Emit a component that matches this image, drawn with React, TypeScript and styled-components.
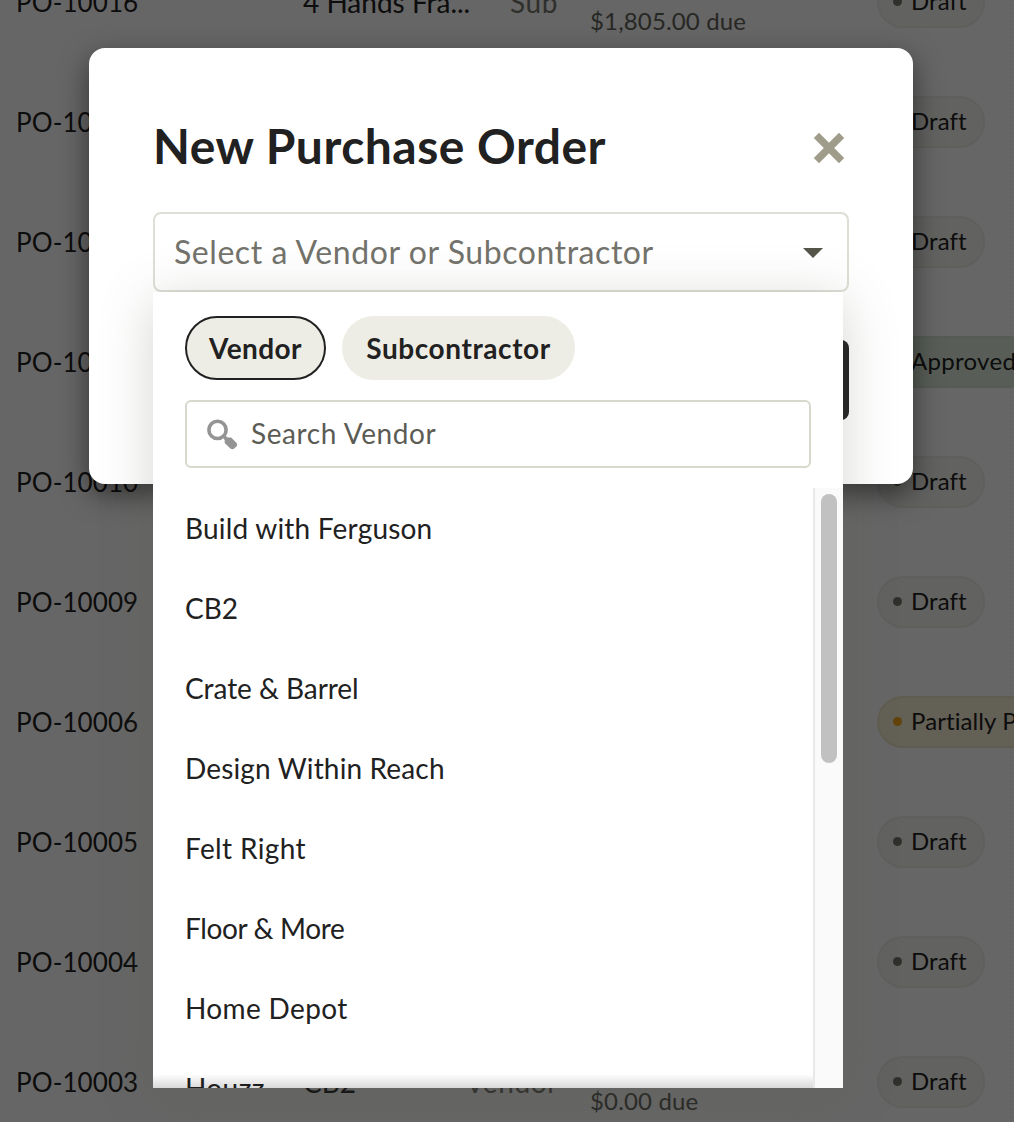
import React from "react";
import styled, { createGlobalStyle } from "styled-components";

const GlobalStyle = createGlobalStyle`
  * { box-sizing: border-box; }
  body {
    margin: 0;
    background: #fff;
    color: #212121;
    font-family: Lato, "Open Sans", sans-serif;
    overflow: hidden;
  }
  button, input { font-family: inherit; }
`;

const Screen = styled.main`
  position: relative;
  height: 1122px;
  overflow: hidden;
`;

const OrderTable = styled.div`
  position: relative;
  display: flex;
  flex-direction: column;
  margin-top: -58px;
`;

const OrderRow = styled.div`
  display: grid;
  grid-template-columns: 287px 176px 77px 34px 286px 1fr;
  align-items: center;
  height: 120px;
  padding-left: 17px;
  white-space: nowrap;
`;

const OrderNumber = styled.span`
  margin: 0 0 1px -1px;
  font-size: 26px;
  letter-spacing: 0.1px;
`;

const VendorName = styled.span`
  margin: 0 0 1px -1px;
  font-size: 28px;
`;

const VendorType = styled.span`
  grid-column: 3;
  justify-self: end;
  margin: 0 -1px 1px 0;
  color: #77776f;
  font-size: 28px;
  letter-spacing: 0.6px;
`;

const Amount = styled.div`
  grid-column: 5;
  display: flex;
  flex-direction: column;
  line-height: 36px;
  padding-top: 1px;
  margin-left: -1px;
  font-size: 24px;
  letter-spacing: 0.15px;
`;

const AmountDue = styled.span`
  color: #62625b;
`;

type Tone = "draft" | "approved" | "partial";

const tones = {
  draft: { fill: "#f6f5f0", line: "#eeede8", dot: "#77776f", track: 0.05 },
  approved: { fill: "#dcecda", line: "#d4e4d2", dot: "#2e7d32", track: 0.3 },
  partial: { fill: "#f8efd6", line: "#eee5cc", dot: "#f5a81c", track: 0.1 },
};

const StatusCell = styled.div`
  grid-column: 6;
  display: flex;
`;

const StatusPill = styled.span<{ $tone: Tone }>`
  display: flex;
  align-items: center;
  gap: 9px;
  height: 52px;
  padding: 0 16px 3px 14px;
  border: 2px solid ${(p) => tones[p.$tone].line};
  border-radius: 26px;
  background: ${(p) => tones[p.$tone].fill};
  font-size: 24px;
  letter-spacing: ${(p) => tones[p.$tone].track}px;

  &::before {
    content: "";
    width: 9px;
    height: 9px;
    margin-top: 2px;
    border-radius: 50%;
    background: ${(p) => tones[p.$tone].dot};
  }
`;

const ColumnEdge = styled.div`
  position: absolute;
  top: 0;
  bottom: 0;
  right: 2px;
  border-right: 2px dotted #f4f4f4;
`;

const Backdrop = styled.div`
  position: absolute;
  inset: 0;
  display: flex;
  align-items: flex-start;
  padding: 48px 0 0 89px;
  background: rgba(0, 0, 0, 0.6);
`;

const Dialog = styled.section`
  display: flex;
  flex-direction: column;
  width: 824px;
  height: 436px;
  padding: 64px;
  border-radius: 16px;
  background: #fff;
  box-shadow: 0 10px 28px rgba(0, 0, 0, 0.5);
`;

const DialogHeader = styled.header`
  display: flex;
  align-items: center;
  justify-content: space-between;
  height: 72px;
  padding-right: 4px;
`;

const DialogTitle = styled.h1`
  margin: 0 0 5px;
  font-size: 48px;
  font-weight: 700;
  letter-spacing: 0.5px;
`;

const CloseButton = styled.button`
  display: flex;
  padding: 0;
  border: 0;
  background: none;
  color: #a09c8c;
`;

const SelectField = styled.div`
  position: relative;
  width: 696px;
  margin-top: 28px;
`;

const SelectTrigger = styled.button`
  display: flex;
  align-items: center;
  justify-content: space-between;
  width: 100%;
  height: 80px;
  padding: 0 24px 0 19px;
  border: 2px solid #deded6;
  border-radius: 8px;
  background: #fff;
  color: #73736c;
  font-size: 32px;
  letter-spacing: 0.56px;
`;

const TriggerLabel = styled.span`
  margin-bottom: 2px;
`;

const Submit = styled.button`
  align-self: flex-end;
  width: 160px;
  height: 80px;
  margin-top: 48px;
  border: 0;
  border-radius: 8px;
  background: #212121;
`;

const Menu = styled.div`
  position: absolute;
  z-index: 1;
  top: 80px;
  left: 0;
  display: flex;
  flex-direction: column;
  width: 690px;
  height: 796px;
  background: #fff;
  box-shadow: 0 8px 48px rgba(90, 90, 80, 0.25);
`;

const MenuTop = styled.div`
  display: flex;
  flex-direction: column;
  gap: 20px;
  padding: 24px 32px 20px;
`;

const Tabs = styled.div`
  display: flex;
  gap: 16px;
`;

const Tab = styled.button<{ $active?: boolean }>`
  width: ${(p) => (p.$active ? 141 : 233)}px;
  height: 64px;
  padding: 0;
  border: 2px solid ${(p) => (p.$active ? "#212121" : "#eeede5")};
  border-radius: 32px;
  background: #eeede5;
  color: #212121;
  font-size: 28px;
  font-weight: 700;
  letter-spacing: ${(p) => (p.$active ? 0.4 : 0.58)}px;
`;

const SearchBox = styled.label`
  display: flex;
  align-items: center;
  gap: 13px;
  width: 626px;
  height: 68px;
  padding-left: 20px;
  border: 2px solid #d8d8cc;
  border-radius: 6px;
`;

const SearchInput = styled.input`
  flex: 1;
  min-width: 0;
  padding: 0 0 2px;
  border: 0;
  outline: 0;
  background: none;
  font-size: 28px;
  letter-spacing: 0.6px;

  &::placeholder {
    color: #5c5c55;
    opacity: 1;
  }
`;

const Results = styled.div`
  position: relative;
  display: flex;
  flex: 1;
  min-height: 0;
  overflow: hidden;
`;

const OptionList = styled.ul`
  flex: 1;
  margin: 0;
  padding: 0;
  list-style: none;
`;

const Option = styled.li<{ $track: number }>`
  display: flex;
  align-items: center;
  height: 80px;
  padding-left: 32px;
  font-size: 28px;
  letter-spacing: ${(p) => p.$track}px;
`;

const ScrollTrack = styled.div`
  width: 30px;
  padding: 6px;
  border-left: 2px solid #e8e8e8;
  background: #fafafa;
`;

const ScrollThumb = styled.div`
  width: 16px;
  height: 269px;
  border-radius: 8px;
  background: #c1c1c1;
`;

const BottomFade = styled.div`
  position: absolute;
  left: 0;
  right: 30px;
  bottom: 0;
  height: 14px;
  background: linear-gradient(rgba(0, 0, 0, 0), rgba(0, 0, 0, 0.15));
`;

interface Order {
  id: string;
  tone: Tone;
  status: string;
  vendor?: string;
  type?: string;
  total?: string;
  due?: string;
}

const draft = { tone: "draft" as Tone, status: "Draft" };

const orders: Order[] = [
  { id: "PO-10016", ...draft, vendor: "4 Hands Fra...", type: "Sub", total: "$1,805.00", due: "$1,805.00 due" },
  { id: "PO-10015", ...draft },
  { id: "PO-10014", ...draft },
  { id: "PO-10012", tone: "approved", status: "Approved" },
  { id: "PO-10010", ...draft },
  { id: "PO-10009", ...draft },
  { id: "PO-10006", tone: "partial", status: "Partially Paid" },
  { id: "PO-10005", ...draft },
  { id: "PO-10004", ...draft },
  { id: "PO-10003", ...draft, vendor: "CB2", type: "Vendor", total: "$0.00", due: "$0.00 due" },
];

const vendors = [
  { name: "Build with Ferguson", track: 0.2 },
  { name: "CB2", track: 0 },
  { name: "Crate & Barrel", track: -0.05 },
  { name: "Design Within Reach", track: 0.15 },
  { name: "Felt Right", track: 0.35 },
  { name: "Floor & More", track: -0.35 },
  { name: "Home Depot", track: 0.35 },
  { name: "Houzz", track: 0.4 },
];

const CloseIcon = () => (
  <svg width="32" height="32" viewBox="0 0 32 32" fill="none" stroke="currentColor" strokeWidth="7.4">
    <path d="M3.4 3.4 28.6 28.6M28.6 3.4 3.4 28.6" />
  </svg>
);

const CaretIcon = () => (
  <svg width="20" height="12" viewBox="0 0 20 12">
    <path d="M0 2h20L10 12z" fill="#55554a" />
  </svg>
);

const SearchIcon = () => (
  <svg width="31" height="31" viewBox="0 0 31 31" fill="none" stroke="#949494">
    <circle cx="10.5" cy="10.9" r="8.6" strokeWidth="3.6" />
    <path d="m16.5 17 4 4" strokeWidth="3.4" />
    <path d="m19.4 18.6-1.7 1.7v3.6l5.7 5.5c1.1 1 2.7 1.1 3.8.2l2.2-2.1c1-1 1-2.6 0-3.7l-5.3-5.2z" fill="#949494" stroke="none" />
  </svg>
);

export default function App() {
  return (
    <Screen>
      <GlobalStyle />
      <ColumnEdge />
      <OrderTable>
        {orders.map((o) => (
          <OrderRow key={o.id}>
            <OrderNumber>{o.id}</OrderNumber>
            {o.vendor && <VendorName>{o.vendor}</VendorName>}
            {o.type && <VendorType>{o.type}</VendorType>}
            {o.total && (
              <Amount>
                <span>{o.total}</span>
                <AmountDue>{o.due}</AmountDue>
              </Amount>
            )}
            <StatusCell>
              <StatusPill $tone={o.tone}>{o.status}</StatusPill>
            </StatusCell>
          </OrderRow>
        ))}
      </OrderTable>
      <Backdrop>
        <Dialog>
          <DialogHeader>
            <DialogTitle>New Purchase Order</DialogTitle>
            <CloseButton aria-label="Close">
              <CloseIcon />
            </CloseButton>
          </DialogHeader>
          <SelectField>
            <SelectTrigger>
              <TriggerLabel>Select a Vendor or Subcontractor</TriggerLabel>
              <CaretIcon />
            </SelectTrigger>
            <Menu>
              <MenuTop>
                <Tabs>
                  <Tab $active>Vendor</Tab>
                  <Tab>Subcontractor</Tab>
                </Tabs>
                <SearchBox>
                  <SearchIcon />
                  <SearchInput placeholder="Search Vendor" />
                </SearchBox>
              </MenuTop>
              <Results>
                <OptionList>
                  {vendors.map((v) => (
                    <Option key={v.name} $track={v.track}>
                      {v.name}
                    </Option>
                  ))}
                </OptionList>
                <ScrollTrack>
                  <ScrollThumb />
                </ScrollTrack>
                <BottomFade />
              </Results>
            </Menu>
          </SelectField>
          <Submit aria-label="Create" />
        </Dialog>
      </Backdrop>
    </Screen>
  );
}
